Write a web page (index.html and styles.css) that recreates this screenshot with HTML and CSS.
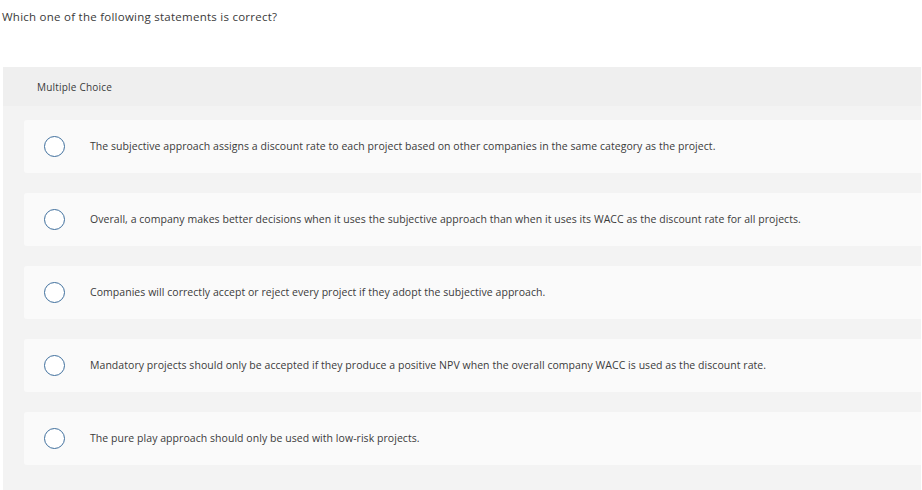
FILE: index.html
```html
<!DOCTYPE html>
<html>
<head>
<meta charset="utf-8">
<link rel="stylesheet" href="styles.css">
</head>
<body>
<p class="question">Which one of the following statements is correct?</p>
<section class="panel">
  <div class="panel-head">Multiple Choice</div>
  <div class="choices">
    <div class="choice"><span class="radio"></span><span class="label">The subjective approach assigns a discount rate to each project based on other companies in the same category as the project.</span></div>
    <div class="choice"><span class="radio"></span><span class="label">Overall, a company makes better decisions when it uses the subjective approach than when it uses its WACC as the discount rate for all projects.</span></div>
    <div class="choice"><span class="radio"></span><span class="label">Companies will correctly accept or reject every project if they adopt the subjective approach.</span></div>
    <div class="choice"><span class="radio"></span><span class="label">Mandatory projects should only be accepted if they produce a positive NPV when the overall company WACC is used as the discount rate.</span></div>
    <div class="choice"><span class="radio"></span><span class="label">The pure play approach should only be used with low-risk projects.</span></div>
  </div>
</section>
</body>
</html>
```

FILE: styles.css
```css
html, body {
  margin: 0;
  padding: 0;
  background: #fff;
}
body {
  font-family: "Open Sans", Lato, sans-serif;
  color: #333;
  padding: 0 1px 0 3px;
}
.question {
  margin: 0;
  padding: 9px 0 0 0;
  margin-left: -1px;
  font-size: 11.5px;
  letter-spacing: 0.25px;
  line-height: 16px;
  height: 58px;
  color: #3a3a3a;
}
.panel {
  background: #f3f3f3;
  padding-bottom: 30px;
}
.panel-head {
  background: #efefef;
  height: 39px;
  display: flex;
  align-items: center;
  padding-left: 34px;
  font-size: 10px;
  letter-spacing: 0.2px;
  color: #3a3a3a;
}
.choices {
  padding: 14px 0 0 21px;
  display: flex;
  flex-direction: column;
  gap: 20px;
}
.choice {
  background: #fafafa;
  height: 53px;
  border-radius: 3px 0 0 3px;
  display: flex;
  align-items: center;
  padding-left: 20px;
}
.radio {
  width: 19px;
  height: 19px;
  border: 1.5px solid #3f6f9d;
  border-radius: 50%;
  background: #fff;
  flex: none;
}
.label {
  margin-left: 25px;
  font-size: 10.5px;
  letter-spacing: 0.05px;
  line-height: 14px;
  margin-top: -2px;
  color: #3a3a3a;
}
```
